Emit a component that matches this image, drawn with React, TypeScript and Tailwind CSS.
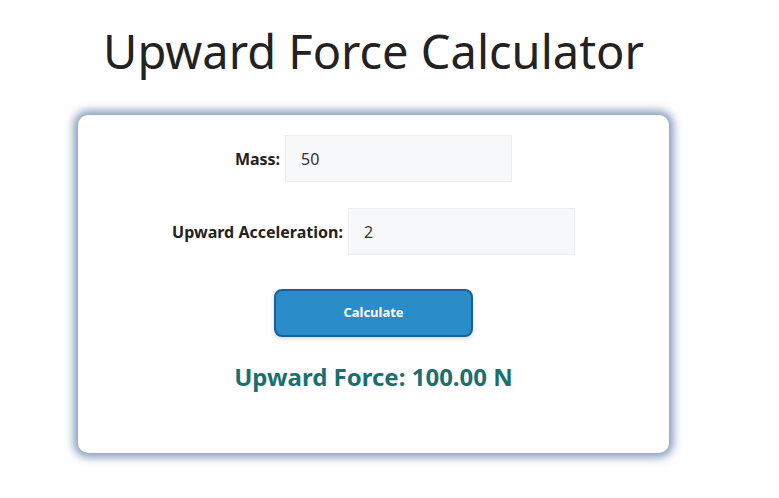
import { useState } from 'react'

export default function App() {
  const [mass, setMass] = useState('50')
  const [accel, setAccel] = useState('2')
  const [force, setForce] = useState<number | null>(100)

  const calculate = () => {
    const m = parseFloat(mass)
    const a = parseFloat(accel)
    if (!isNaN(m) && !isNaN(a)) setForce(m * a)
  }

  return (
    <div className="min-h-screen w-full bg-white font-['Noto_Sans','Open_Sans',sans-serif]">
      <div className="w-[747px] flex flex-col items-center pt-[20px]">
        <h1 className="text-[47px] leading-[62px] font-normal text-[#222]">Upward Force Calculator</h1>

        {/* Card */}
        <div className="mt-[33px] w-[591px] h-[338px] bg-white rounded-[10px] shadow-[0_0_10px_4px_rgba(95,125,165,0.8)] flex flex-col items-center pt-[20px]">
          <div className="flex items-center gap-[5px]">
            <label className="text-[16px] font-bold text-[#222]">Mass:</label>
            <input
              value={mass}
              onChange={e => setMass(e.target.value)}
              className="w-[227px] h-[47px] px-[15px] bg-[#f7f8fa] border border-[#eceef1] text-[16px] text-[#333] outline-none"
            />
          </div>

          <div className="flex items-center gap-[5px] mt-[26px]">
            <label className="text-[16px] font-bold text-[#222]">Upward Acceleration:</label>
            <input
              value={accel}
              onChange={e => setAccel(e.target.value)}
              className="w-[227px] h-[47px] px-[15px] bg-[#f7f8fa] border border-[#eceef1] text-[16px] text-[#333] outline-none"
            />
          </div>

          <button
            onClick={calculate}
            className="mt-[34px] w-[199px] h-[48px] bg-[#2a8dc8] border-2 border-[#1b5f9e] rounded-[8px] text-white text-[13px] font-bold shadow-[0_2px_4px_rgba(0,0,0,0.15)]"
          >
            Calculate
          </button>

          {force !== null && (
            <p className="mt-[22px] text-[24px] leading-[36px] font-bold text-[#1c6f6f]">
              Upward Force: {force.toFixed(2)} N
            </p>
          )}
        </div>
      </div>
    </div>
  )
}
